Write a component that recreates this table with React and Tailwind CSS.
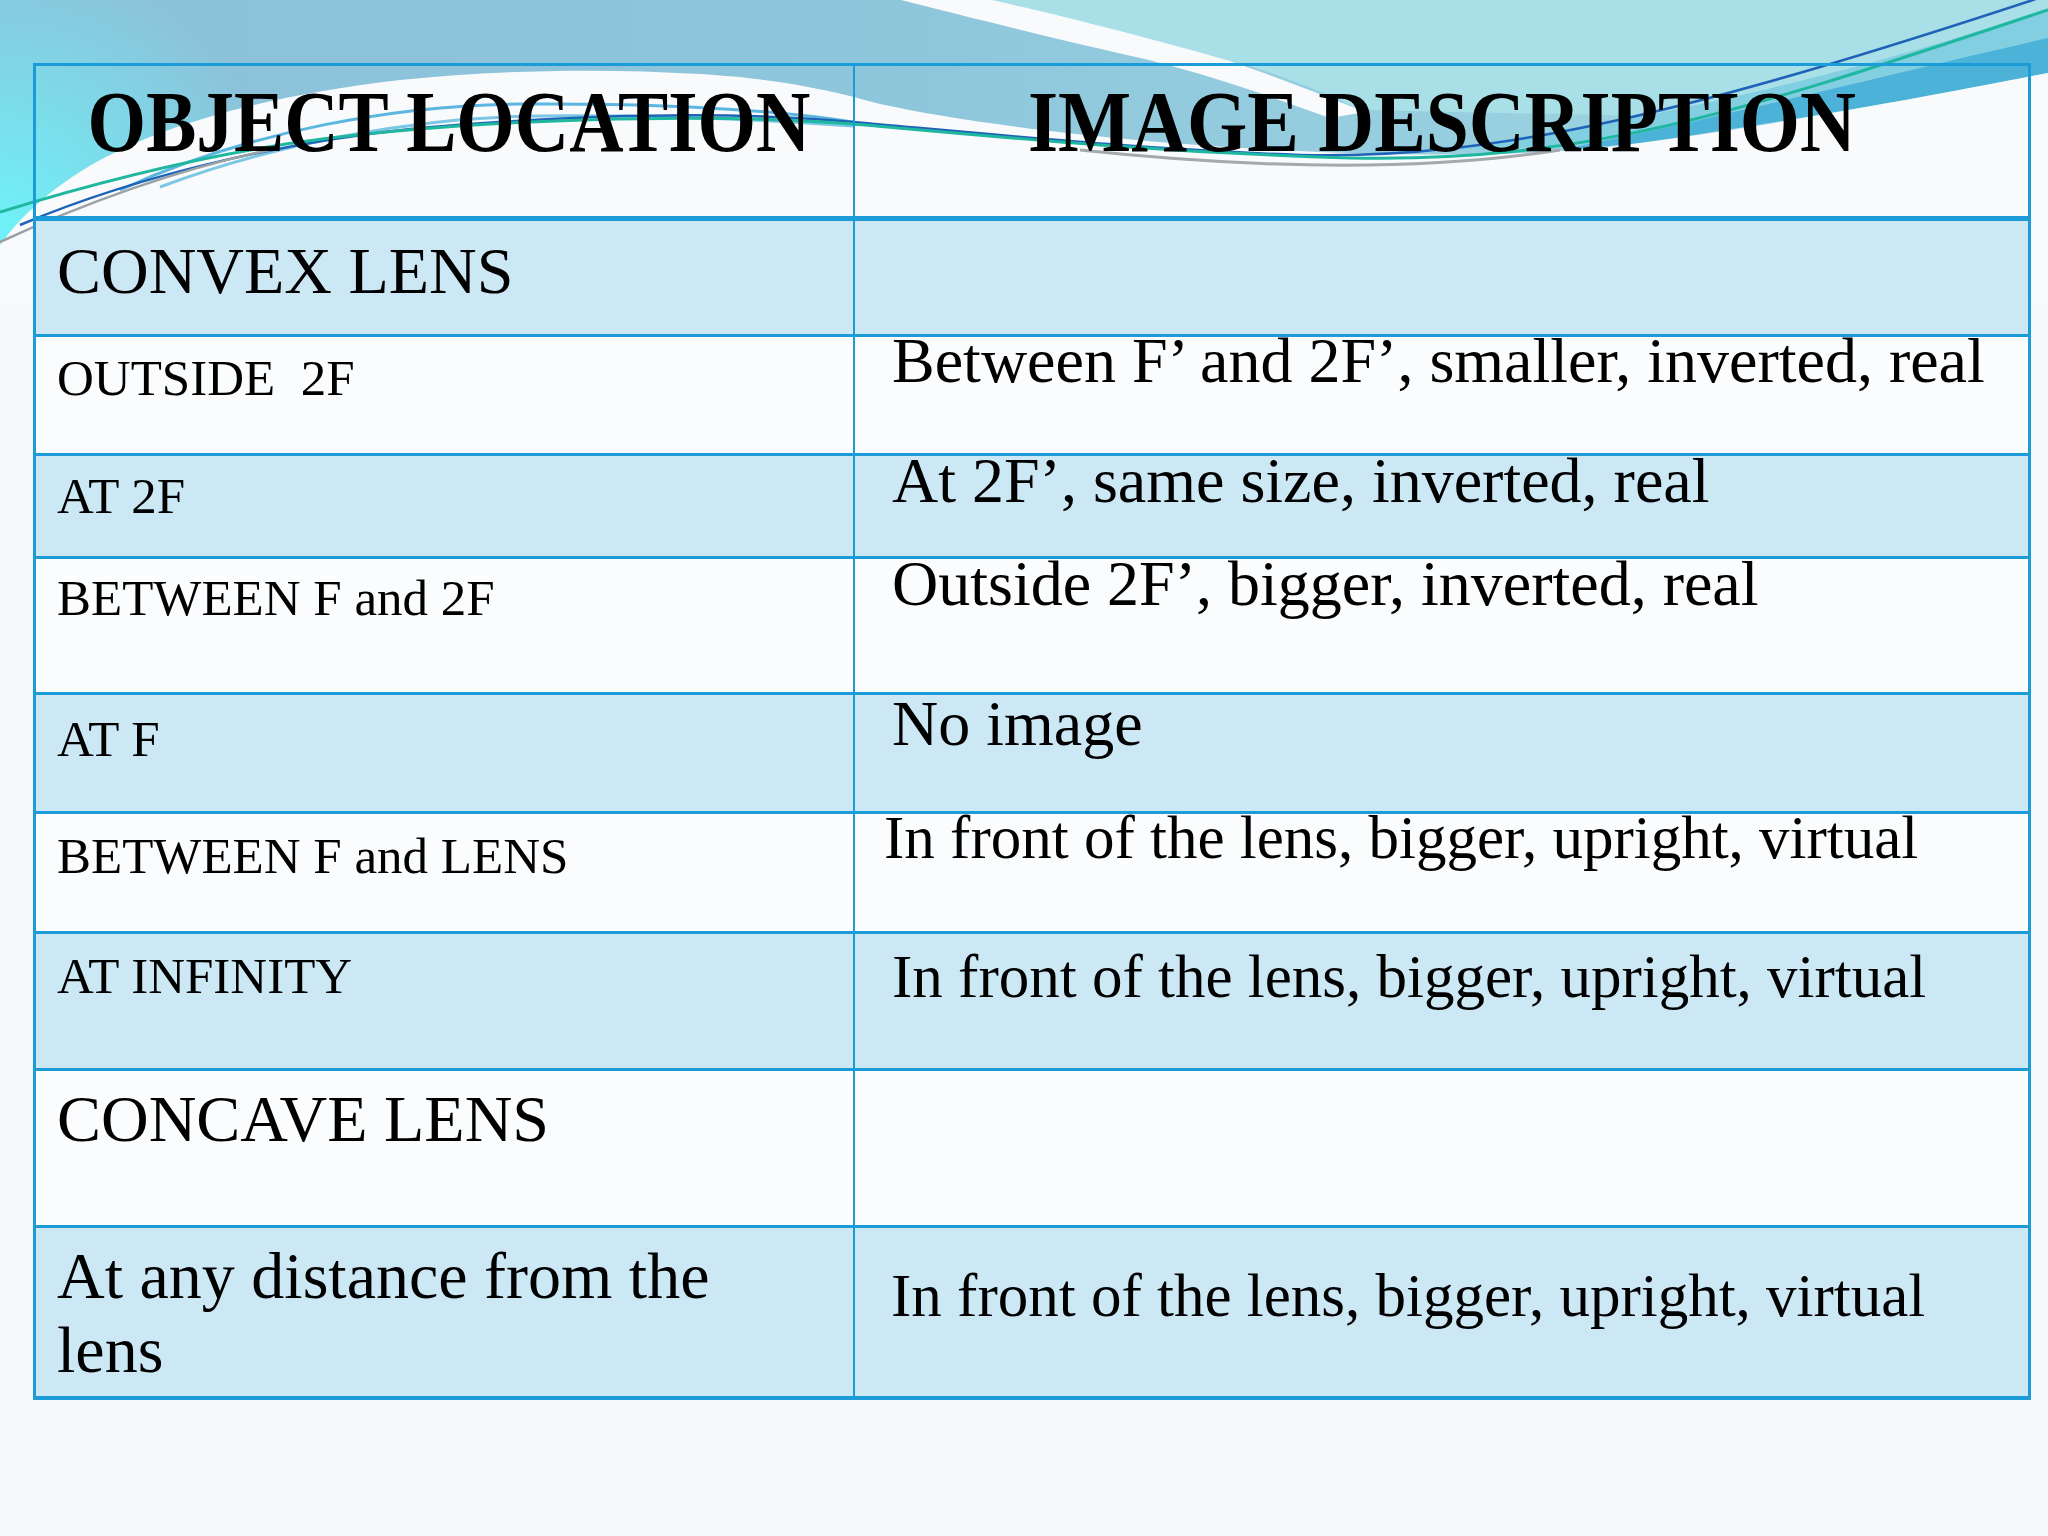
import React from 'react';

const line = 'border-[#1b9bd7]';
const blue = 'bg-[#cde8f5]';
const white = 'bg-[#fafcfd]';

const rows = [
  { h: 'h-[116px]', bg: blue, left: 'CONVEX LENS', lc: 'text-[66px] leading-none pt-[17px]' },
  {
    h: 'h-[119px]', bg: white, left: 'OUTSIDE  2F', lc: 'text-[51px] leading-none pt-[16px]',
    right: 'Between F’ and 2F’, smaller, inverted, real', rc: 'text-[64px] leading-[48px] pt-0 pl-[37px]',
  },
  {
    h: 'h-[103px]', bg: blue, left: 'AT 2F', lc: 'text-[51px] leading-none pt-[15px]',
    right: 'At 2F’, same size, inverted, real', rc: 'text-[64px] leading-[48px] pt-[1px] pl-[37px]',
  },
  {
    h: 'h-[136px]', bg: white, left: 'BETWEEN F and 2F', lc: 'text-[51px] leading-none pt-[14px]',
    right: 'Outside 2F’, bigger, inverted, real', rc: 'text-[64px] leading-[48px] pt-[1px] pl-[37px]',
  },
  {
    h: 'h-[119px]', bg: blue, left: 'AT F', lc: 'text-[51px] leading-none pt-[19px]',
    right: 'No image', rc: 'text-[64px] leading-[48px] pt-[5px] pl-[37px]',
  },
  {
    h: 'h-[120px]', bg: white, left: 'BETWEEN F and LENS', lc: 'text-[51px] leading-none pt-[17px]',
    right: 'In front of the lens, bigger, upright, virtual', rc: 'text-[61px] leading-[48px] pt-0 pl-[29px]',
  },
  {
    h: 'h-[137px]', bg: blue, left: 'AT INFINITY', lc: 'text-[51px] leading-none pt-[17px]',
    right: 'In front of the lens, bigger, upright, virtual', rc: 'text-[61px] leading-[48px] pt-[19px] pl-[37px]',
  },
  { h: 'h-[157px]', bg: white, left: 'CONCAVE LENS', lc: 'text-[66px] leading-none pt-[15px]' },
  {
    h: 'h-[168px]', bg: blue, left: 'At any distance from the lens', lc: 'text-[66px] leading-[74px] pt-[11px] pr-[60px]',
    right: 'In front of the lens, bigger, upright, virtual', rc: 'text-[61px] leading-[48px] pt-[44px] pl-[36px]',
    last: true,
  },
];

const Backdrop = () => (
  <svg className="absolute left-0 top-0" width="2048" height="300" viewBox="0 0 2048 300">
    <defs>
      <linearGradient id="sky" x1="0" y1="0" x2="1" y2="0">
        <stop offset="0" stopColor="#8bc1d9" />
        <stop offset="0.45" stopColor="#8ec6dc" />
        <stop offset="1" stopColor="#a3d9e4" />
      </linearGradient>
      <radialGradient id="cyan" cx="0" cy="230" r="280" gradientUnits="userSpaceOnUse">
        <stop offset="0" stopColor="#6ff2f8" />
        <stop offset="1" stopColor="#6ff2f8" stopOpacity="0" />
      </radialGradient>
    </defs>
    <rect width="2048" height="300" fill="url(#sky)" />
    <rect width="2048" height="300" fill="url(#cyan)" />
    {/* light teal area right of the arc */}
    <path d="M992,0 C1060,15 1150,40 1227,60 C1300,80 1340,100 1360,110 L1847,120 L2048,43 L2048,0 Z" fill="#a9dfe6" />
    {/* white arc */}
    <path d="M901,0 C960,15 1060,40 1149,60 C1220,78 1280,100 1330,118 L1365,112 C1305,88 1262,72 1227,60 C1150,38 1060,15 992,0 Z" fill="#f8fafb" />
    {/* bands at right */}
    <path d="M1450,150 C1700,112 1900,60 2048,8 L2048,40 C1950,75 1800,115 1640,143 Z" fill="#82cfe2" />
    <path d="M1560,150 C1700,122 1900,72 2048,38 L2048,73 C1950,92 1800,120 1640,143 Z" fill="#4cb2d8" />
    {/* white swoosh */}
    <path
      d="M0,245 C40,190 100,155 163,132 C230,108 300,92 400,80 C500,70 600,68 700,74 C780,79 830,90 880,104 C1000,130 1200,150 1385,154 C1500,156 1580,152 1640,143 C1750,128 1820,115 1866,107 C1950,92 2000,82 2048,73 L2048,300 L0,300 Z"
      fill="#f9fafc"
    />
    {/* thin lines */}
    <path d="M120,190 C250,130 400,105 520,104 C650,103 760,108 853,122" fill="none" stroke="#5bb7df" strokeWidth="3" />
    <path d="M160,187 C280,142 420,117 540,116 C660,115 770,120 853,126" fill="none" stroke="#7cc6e6" strokeWidth="3" />
    <path
      d="M20,225 C150,170 300,140 420,128 C560,116 720,110 853,122 C1000,135 1150,150 1300,155 C1500,160 1700,110 2048,-5"
      fill="none" stroke="#1e63b8" strokeWidth="2.5"
    />
    <path
      d="M0,212 C120,175 230,150 330,138 C480,120 700,112 853,124 C1000,137 1150,152 1350,158 C1600,163 1760,105 2048,10"
      fill="none" stroke="#1fb79f" strokeWidth="3"
    />
    <path d="M0,242 C80,205 180,168 270,150" fill="none" stroke="#9aa2a6" strokeWidth="2.5" />
    <path d="M1080,150 C1250,168 1420,172 1560,150" fill="none" stroke="#a3a9ad" strokeWidth="3" />
  </svg>
);

export default function App() {
  return (
    <div className="relative w-[2048px] h-[1536px] overflow-hidden bg-[#f8f9fb] font-['Liberation_Serif',serif] text-black">
      <Backdrop />
      <div className="relative pl-[33px] pt-[63px]">
        <div className={`w-[1998px] border-[3px] border-b-4 ${line}`}>
          {/* header */}
          <div className={`flex h-[155px] border-b-[5px] ${line}`}>
            <div className={`w-[819px] border-r-2 ${line} text-center pt-[13px]`}>
              <span className="inline-block scale-x-[0.875] text-[86px] font-bold leading-none whitespace-nowrap">
                OBJECT LOCATION
              </span>
            </div>
            <div className="flex-1 text-center pt-[13px]">
              <span className="inline-block scale-x-[0.9] text-[86px] font-bold leading-none whitespace-nowrap">
                IMAGE DESCRIPTION
              </span>
            </div>
          </div>

          {rows.map((r, i) => (
            <div key={i} className={`flex ${r.h} ${r.bg} ${r.last ? '' : `border-b-[3px] ${line}`}`}>
              <div className={`w-[819px] border-r-2 ${line} pl-[21px] whitespace-pre-wrap ${r.lc}`}>{r.left}</div>
              <div className={`flex-1 whitespace-nowrap ${r.rc || ''}`}>{r.right}</div>
            </div>
          ))}
        </div>
      </div>
    </div>
  );
}
